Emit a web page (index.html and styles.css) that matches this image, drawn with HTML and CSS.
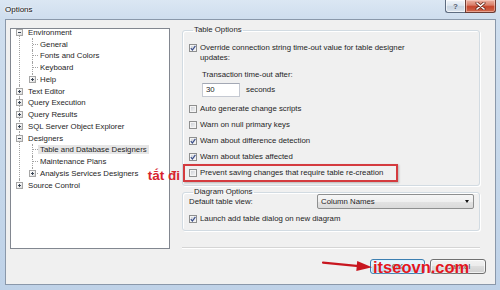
FILE: index.html
```html
<!DOCTYPE html>
<html>
<head>
<meta charset="utf-8">
<link rel="stylesheet" href="styles.css">
</head>
<body>
<div class="window">
  <div class="titlebar">
    <span class="title">Options</span>
    <div class="caption">
      <span class="cap help">?</span>
      <span class="cap close"><svg width="11" height="8" viewBox="0 0 11 8"><path d="M2 1 L9 7 M9 1 L2 7" stroke="#6b2a1e" stroke-width="3" stroke-linecap="round"/><path d="M2 1 L9 7 M9 1 L2 7" stroke="#fff" stroke-width="1.6" stroke-linecap="round"/></svg></span>
    </div>
  </div>
  <div class="client">
    <div class="main">
      <div class="tree">
        <ul class="root">
          <li class="top"><div class="row"><span class="exp minus"></span><span class="txt">Environment</span></div>
            <ul class="kids">
              <li class="kid"><div class="row leaf"><span class="txt">General</span></div></li>
              <li class="kid"><div class="row leaf"><span class="txt">Fonts and Colors</span></div></li>
              <li class="kid"><div class="row leaf"><span class="txt">Keyboard</span></div></li>
              <li class="kid"><div class="row knode"><span class="exp plus"></span><span class="txt">Help</span></div></li>
            </ul>
          </li>
          <li class="top"><div class="row"><span class="exp plus"></span><span class="txt">Text Editor</span></div></li>
          <li class="top"><div class="row"><span class="exp plus"></span><span class="txt">Query Execution</span></div></li>
          <li class="top"><div class="row"><span class="exp plus"></span><span class="txt">Query Results</span></div></li>
          <li class="top"><div class="row"><span class="exp plus"></span><span class="txt">SQL Server Object Explorer</span></div></li>
          <li class="top"><div class="row"><span class="exp minus"></span><span class="txt">Designers</span></div>
            <ul class="kids">
              <li class="kid"><div class="row leaf sel"><span class="txt">Table and Database Designers</span></div></li>
              <li class="kid"><div class="row leaf"><span class="txt">Maintenance Plans</span></div></li>
              <li class="kid"><div class="row knode"><span class="exp plus"></span><span class="txt">Analysis Services Designers</span></div></li>
            </ul>
          </li>
          <li class="top"><div class="row"><span class="exp plus"></span><span class="txt">Source Control</span></div></li>
        </ul>
      </div>
      <div class="panel">
        <fieldset class="group tbl">
          <legend>Table Options</legend>
          <div class="chk first"><span class="cb"><svg viewBox="0 0 6 6"><path d="M0.8 3.2 L2.4 5 L5.4 0.8" fill="none" stroke="#3b4f8a" stroke-width="1.2"/></svg></span><span>Override connection string time-out value for table designer<br>updates:</span></div>
          <div class="sub">
            <div class="lbl">Transaction time-out after:</div>
            <div class="inrow"><span class="input">30</span><span>seconds</span></div>
          </div>
          <div class="chk auto"><span class="cb"></span><span>Auto generate change scripts</span></div>
          <div class="chk"><span class="cb"></span><span>Warn on null primary keys</span></div>
          <div class="chk"><span class="cb"><svg viewBox="0 0 6 6"><path d="M0.8 3.2 L2.4 5 L5.4 0.8" fill="none" stroke="#3b4f8a" stroke-width="1.2"/></svg></span><span>Warn about difference detection</span></div>
          <div class="chk"><span class="cb"><svg viewBox="0 0 6 6"><path d="M0.8 3.2 L2.4 5 L5.4 0.8" fill="none" stroke="#3b4f8a" stroke-width="1.2"/></svg></span><span>Warn about tables affected</span></div>
          <div class="hl">
            <span class="note">tắt đi</span>
            <div class="chk inhl"><span class="cb"></span><span>Prevent saving changes that require table re-creation</span></div>
          </div>
        </fieldset>
        <fieldset class="group dia">
          <legend>Diagram Options</legend>
          <div class="viewrow">
            <span>Default table view:</span>
            <span class="combo"><span>Column Names</span><span class="tri"></span></span>
          </div>
          <div class="chk launch"><span class="cb"><svg viewBox="0 0 6 6"><path d="M0.8 3.2 L2.4 5 L5.4 0.8" fill="none" stroke="#3b4f8a" stroke-width="1.2"/></svg></span><span>Launch add table dialog on new diagram</span></div>
        </fieldset>
        <div class="sep"></div>
      </div>
    </div>
    <div class="buttons">
      <span class="btn ok">OK</span>
      <span class="btn cancel">Cancel</span>
      <svg class="arrow" width="54" height="15" viewBox="0 0 54 15"><path d="M2 4.7 L38 8.1" stroke="#c8161f" stroke-width="2.2" stroke-linecap="round"/><polygon points="51,9.3 35.3,12.9 36.2,2.9" fill="#c8161f"/></svg>
      <span class="wm">itseovn.com</span>
    </div>
  </div>
</div>
</body>
</html>
```

FILE: styles.css
```css
html, body {
  margin: 0;
  padding: 0;
}
body {
  width: 500px;
  height: 290px;
  overflow: hidden;
  font-family: "Liberation Sans", Arial, sans-serif;
  font-size: 7.8px;
  color: #1e1e1e;
  background: #c8d8ea;
}
.window {
  height: 290px;
  display: flex;
  flex-direction: column;
  background: linear-gradient(180deg, #dbe7f3 0, #cfdeee 18px, #c5d7ea 60%, #bfd2e8 100%);
}
.titlebar {
  height: 19px;
  display: flex;
  justify-content: space-between;
  align-items: flex-start;
  flex: none;
}
.title {
  margin: 5px 0 0 5px;
  font-size: 8px;
  line-height: 9px;
  color: #111;
  text-shadow: 0 0 3px #fff, 0 0 2px #fff;
}
.caption {
  display: flex;
  margin-right: 4px;
}
.cap {
  height: 13px;
  box-sizing: border-box;
  border: 1px solid #5e6c80;
  border-top: none;
  display: flex;
  align-items: center;
  justify-content: center;
}
.help {
  width: 20px;
  border-right: none;
  border-radius: 0 0 0 3px;
  background: linear-gradient(180deg, #f1f5fa 0, #dde6ef 45%, #c9d5e2 55%, #dae3ed 100%);
  color: #56606e;
  font-size: 8px;
  font-weight: bold;
  box-shadow: inset 0 0 0 1px rgba(255,255,255,.6);
}
.close {
  width: 31px;
  border-radius: 0 0 3px 0;
  border-color: #6a3b34;
  background: linear-gradient(180deg, #ebb2a4 0, #d9806b 42%, #c5462d 55%, #d06a4f 100%);
  box-shadow: inset 0 0 0 1px rgba(255,220,210,.5);
}
.close svg {
  display: block;
}
.client {
  flex: 1;
  margin: 0 4px 5px 5px;
  background: #f0f0f0;
  border: 1px solid #8a98aa;
  display: flex;
  flex-direction: column;
  min-height: 0;
}
.main {
  display: flex;
  padding: 5px 0 0 4px;
}
/* tree */
.tree {
  margin-top: 3px;
  width: 160px;
  height: 221px;
  box-sizing: border-box;
  border: 1px solid #828790;
  background: #fff;
  overflow: hidden;
}
.tree ul {
  list-style: none;
  margin: 0;
  padding: 0;
}
.root {
  margin-top: -2.5px !important;
}
.tree li {
  position: relative;
}
.row {
  display: flex;
  align-items: center;
  height: 11.75px;
  white-space: nowrap;
  position: relative;
  z-index: 1;
}
.top > .row {
  padding-left: 5px;
}
.top > .row .exp {
  margin-right: 5px;
}
.knode {
  padding-left: 18px;
}
.knode .exp {
  margin-right: 4px;
}
.leaf {
  padding-left: 29px;
}
.txt {
  line-height: 9px;
}
.sel .txt {
  background: #e6e6e6;
  padding: 0 2px;
  margin-left: -2px;
}
.top::before {
  content: "";
  position: absolute;
  left: 8px;
  top: 0;
  bottom: 0;
  border-left: 1px dotted #a3a3a3;
}
.top:first-child::before {
  top: 5.9px;
}
.top:last-child::before {
  bottom: auto;
  height: 5.9px;
}
.kid::before {
  content: "";
  position: absolute;
  left: 21px;
  top: 0;
  bottom: 0;
  border-left: 1px dotted #a3a3a3;
}
.kid:last-child::before {
  bottom: auto;
  height: 5.9px;
}
.kid::after {
  content: "";
  position: absolute;
  left: 22px;
  top: 5.4px;
  width: 5px;
  border-top: 1px dotted #a3a3a3;
}
.exp {
  flex: none;
  width: 7px;
  height: 7px;
  box-sizing: border-box;
  border: 1px solid #a6a6a6;
  background: linear-gradient(135deg, #ffffff 0, #f2f2f2 50%, #d8d8d8 100%);
  position: relative;
}
.exp::before {
  content: "";
  position: absolute;
  left: 1px;
  top: 2px;
  width: 3px;
  height: 1px;
  background: #3c4756;
}
.plus::after {
  content: "";
  position: absolute;
  left: 2px;
  top: 1px;
  width: 1px;
  height: 3px;
  background: #3c4756;
}
/* panel */
.panel {
  margin-left: 12px;
  width: 298px;
  display: flex;
  flex-direction: column;
}
.group {
  margin: 0;
  min-width: 0;
  border: 1px solid #d2dbe2;
  border-radius: 3px;
  box-shadow: inset 1px 1px 0 #fff, 1px 1px 0 #fff;
}
.group legend {
  margin-left: 4px;
  padding: 0 1px;
  line-height: 10px;
}
.tbl {
  padding: 7.5px 5px 2.5px 6px;
}
.chk {
  display: flex;
  align-items: flex-start;
  line-height: 10px;
  white-space: nowrap;
}
.chk + .chk {
  margin-top: 6px;
}
.cb {
  flex: none;
  width: 8px;
  height: 8px;
  box-sizing: border-box;
  margin: 1px 3px 0 0;
  border: 1px solid #8e8f8f;
  background: linear-gradient(135deg, #c6cad0 0, #e3e5e8 55%, #f7f7f7 100%);
  box-shadow: inset 0 0 0 1px #f4f4f4;
}
.cb svg {
  display: block;
  width: 6px;
  height: 6px;
}
.sub {
  margin: 7.5px 0 0 13px;
}
.lbl {
  line-height: 10px;
}
.inrow {
  display: flex;
  align-items: center;
  margin-top: 3.3px;
}
.input {
  width: 38px;
  height: 13.4px;
  box-sizing: border-box;
  border: 1px solid #c5c9d2;
  border-top-color: #a3a8b4;
  background: #fff;
  padding-left: 3px;
  line-height: 11.4px;
  margin-right: 6px;
}
.auto {
  margin-top: 7.6px;
}
.hl {
  position: relative;
  margin: 2px 0 0 -6px;
  width: 215px;
  box-sizing: border-box;
  border: 2px solid #d43b3f;
  padding: 2px 4px;
  box-shadow: 1px 1px 2px rgba(0,0,0,.25);
}
.note {
  position: absolute;
  right: calc(100% + 5px);
  top: 3px;
  font-size: 13.5px;
  font-weight: bold;
  line-height: 14px;
  color: #d7242e;
  white-space: nowrap;
}
.dia {
  margin-top: 1.4px;
  padding: 0 5px 5.7px 6px;
}
.viewrow {
  display: flex;
  align-items: center;
  justify-content: space-between;
  margin-top: -2.7px;
}
.combo {
  width: 157px;
  height: 14.3px;
  box-sizing: border-box;
  border: 1px solid #8e8f8f;
  border-radius: 2px;
  background: linear-gradient(180deg, #f6f6f6 0, #efefef 50%, #e3e3e3 50%, #dadada 100%);
  display: flex;
  align-items: center;
  justify-content: space-between;
  padding: 0 4px 0 3px;
}
.tri {
  width: 0;
  height: 0;
  border-left: 2.5px solid transparent;
  border-right: 2.5px solid transparent;
  border-top: 3px solid #111;
}
.launch {
  margin-top: 5.7px;
}
.sep {
  margin-top: 15.6px;
  border-top: 1px solid #d5d5d5;
  border-bottom: 1px solid #fff;
}
/* buttons */
.buttons {
  margin-top: auto;
  position: relative;
  display: flex;
  justify-content: flex-end;
  gap: 5px;
  padding: 0 9px 10px 0;
}
.btn {
  width: 55px;
  height: 15px;
  box-sizing: border-box;
  border: 1px solid #707070;
  border-radius: 3px;
  background: linear-gradient(180deg, #f2f2f2 0, #ebebeb 50%, #dddddd 50%, #cfcfcf 100%);
  box-shadow: inset 0 0 0 1px rgba(255,255,255,.7);
  text-align: center;
  line-height: 13px;
}
.cancel {
  width: 56px;
}
.ok {
  border-color: #3c7fb1;
  background: linear-gradient(180deg, #eaf6fd 0, #d9f0fc 50%, #bee6fd 50%, #a7d9f5 100%);
  box-shadow: inset 0 0 0 1px #dff2fd;
}
.arrow {
  position: absolute;
  left: 315px;
  top: -1px;
}
.wm {
  position: absolute;
  left: 367px;
  top: -0.5px;
  font-size: 16.5px;
  font-weight: bold;
  line-height: 17px;
  color: #e3161e;
  text-shadow: 0 0 2px rgba(255,255,255,.8);
  white-space: nowrap;
}
```
